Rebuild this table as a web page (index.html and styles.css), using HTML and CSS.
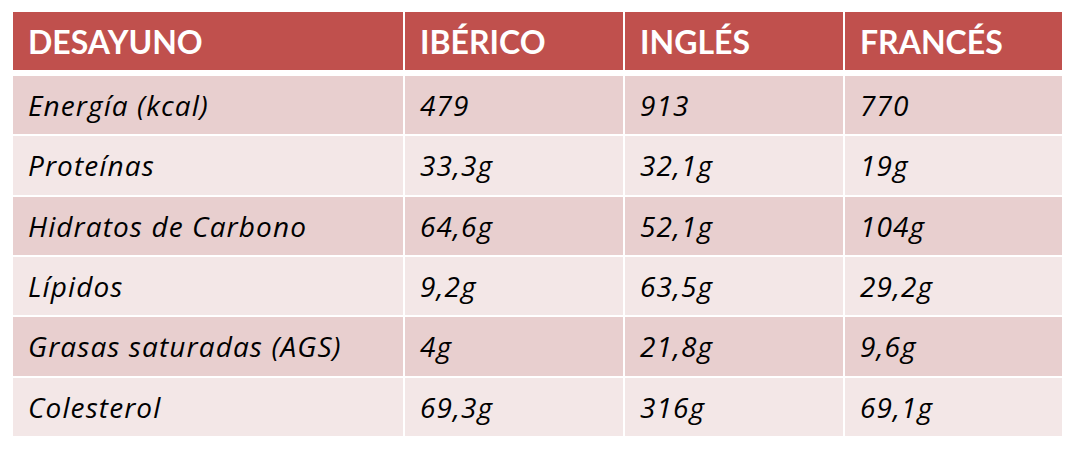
FILE: index.html
```html
<!DOCTYPE html>
<html lang="es">
<head>
<meta charset="utf-8">
<title>Desayuno</title>
<link rel="stylesheet" href="styles.css">
</head>
<body>
<div class="table">
  <div class="cell head">DESAYUNO</div>
  <div class="cell head">IBÉRICO</div>
  <div class="cell head">INGLÉS</div>
  <div class="cell head">FRANCÉS</div>

  <div class="cell odd">Energía (kcal)</div>
  <div class="cell odd">479</div>
  <div class="cell odd">913</div>
  <div class="cell odd">770</div>

  <div class="cell even">Proteínas</div>
  <div class="cell even">33,3g</div>
  <div class="cell even">32,1g</div>
  <div class="cell even">19g</div>

  <div class="cell odd">Hidratos de Carbono</div>
  <div class="cell odd">64,6g</div>
  <div class="cell odd">52,1g</div>
  <div class="cell odd">104g</div>

  <div class="cell even">Lípidos</div>
  <div class="cell even">9,2g</div>
  <div class="cell even">63,5g</div>
  <div class="cell even">29,2g</div>

  <div class="cell odd">Grasas saturadas (AGS)</div>
  <div class="cell odd">4g</div>
  <div class="cell odd">21,8g</div>
  <div class="cell odd">9,6g</div>

  <div class="cell even">Colesterol</div>
  <div class="cell even">69,3g</div>
  <div class="cell even">316g</div>
  <div class="cell even">69,1g</div>
</div>
</body>
</html>
```
FILE: styles.css
```css
html, body {
  margin: 0;
  padding: 0;
  background: #ffffff;
}
body {
  padding: 12px 0 0 13px;
}
.table {
  display: grid;
  grid-template-columns: 390px 218px 218px 217px;
  grid-template-rows: 62px repeat(6, 58.33px);
  column-gap: 2px;
  row-gap: 2px;
  width: 1049px;
}
.cell {
  display: flex;
  align-items: center;
  padding: 0 0 0 15px;
  color: #000000;
  font-family: "Open Sans", Lato, "Liberation Sans", sans-serif;
  font-style: italic;
  font-size: 28px;
  letter-spacing: 1.1px;
  white-space: nowrap;
}
.head {
  background: #c0504d;
  color: #ffffff;
  font-family: Lato, "Open Sans", "Liberation Sans", sans-serif;
  font-style: normal;
  font-weight: 700;
  font-size: 32px;
  letter-spacing: 0;
  margin-bottom: 4px;
}
.odd {
  background: #e8cfcf;
}
.even {
  background: #f3e7e7;
}
```
